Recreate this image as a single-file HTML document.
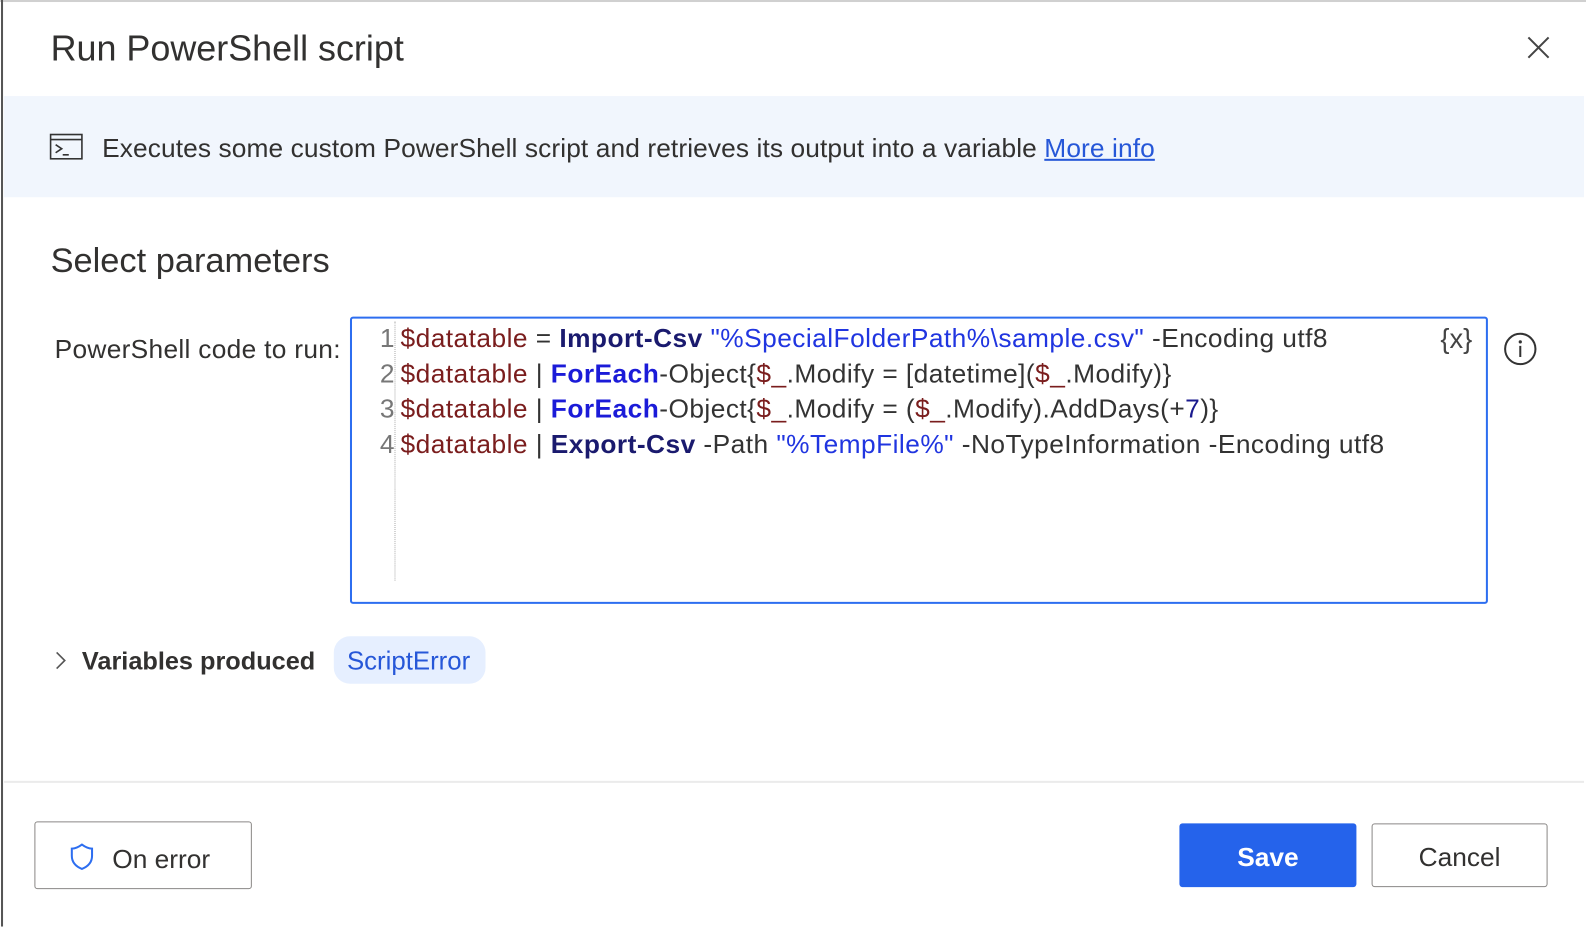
<!DOCTYPE html>
<html><head><meta charset="utf-8"><style>
*{margin:0;padding:0;box-sizing:border-box}
body{width:1586px;height:926px;background:#fff;font-family:"Liberation Sans",sans-serif;color:#323130;position:relative;overflow:hidden}
#w{position:absolute;left:0;top:0;width:1568px;height:916px;transform:scale(1.0115);transform-origin:0 0}
.abs{position:absolute;white-space:nowrap}
.code{font-size:26px;line-height:35px;letter-spacing:0.45px}
.dv{color:#7a1d1d}.kw{color:#1a1a6e;font-weight:bold}.fe{color:#1b1bd8;font-weight:bold}.st{color:#2035e0}.pl{color:#333}.num{color:#1a1a8e}
.ln{color:#777;display:inline-block;width:44px;text-align:right;padding-right:6px;letter-spacing:0}
</style></head><body><div id="w">
<div class="abs" style="left:0;top:0;width:1568px;height:2px;background:#d0d0d0"></div>
<div class="abs" style="left:1px;top:0;width:2px;height:916px;background:#555"></div>
<div class="abs" style="left:50px;top:28px;font-size:35.5px;color:#323130">Run PowerShell script</div>
<svg class="abs" style="left:1508px;top:34px" width="26" height="26" viewBox="0 0 26 26"><path d="M3 3L23 23M23 3L3 23" stroke="#444" stroke-width="2"/></svg>
<div class="abs" style="left:4px;top:95px;width:1562px;height:100px;background:#f1f6fd"></div>
<svg class="abs" style="left:49px;top:132px" width="33" height="26" viewBox="0 0 33 26"><rect x="1" y="1" width="31" height="24" fill="none" stroke="#333" stroke-width="1.6"/><path d="M1 6H32" stroke="#333" stroke-width="1.6"/><path d="M6 11L12 15L6 19M13 21H19" fill="none" stroke="#333" stroke-width="1.6"/></svg>
<div class="abs" style="left:101px;top:131px;font-size:26px;letter-spacing:0.1px;color:#323130">Executes some custom PowerShell script and retrieves its output into a variable <span style="color:#2657d8;text-decoration:underline">More info</span></div>
<div class="abs" style="left:50px;top:239px;font-size:34px;color:#323130">Select parameters</div>
<div class="abs" style="left:54px;top:330px;font-size:26px;letter-spacing:0.3px;color:#323130">PowerShell code to run:</div>
<div class="abs" style="left:346px;top:313px;width:1125px;height:284px;border:2px solid #2d6ef0;border-radius:3px"></div>
<div class="abs" style="left:390px;top:318px;height:256px;border-left:1px dotted #aaa"></div>
<div class="abs code" style="left:352px;top:317px">
<div><span class="ln">1</span><span class="dv">$datatable</span> <span class="pl">=</span> <span class="kw">Import-Csv</span> <span class="st">"%SpecialFolderPath%\sample.csv"</span> <span class="pl">-Encoding utf8</span></div>
<div><span class="ln">2</span><span class="dv">$datatable</span> <span class="pl">|</span> <span class="fe">ForEach</span><span class="pl">-Object{</span><span class="dv">$_</span><span class="pl">.Modify = [datetime](</span><span class="dv">$_</span><span class="pl">.Modify)}</span></div>
<div><span class="ln">3</span><span class="dv">$datatable</span> <span class="pl">|</span> <span class="fe">ForEach</span><span class="pl">-Object{</span><span class="dv">$_</span><span class="pl">.Modify = (</span><span class="dv">$_</span><span class="pl">.Modify).AddDays(+</span><span class="num">7</span><span class="pl">)}</span></div>
<div><span class="ln">4</span><span class="dv">$datatable</span> <span class="pl">|</span> <span class="kw">Export-Csv</span> <span class="pl">-Path</span> <span class="st">"%TempFile%"</span> <span class="pl">-NoTypeInformation -Encoding utf8</span></div>
</div>
<div class="abs" style="left:1424px;top:320px;font-size:27px;color:#444">{x}</div>
<svg class="abs" style="left:1486px;top:328px" width="34" height="34" viewBox="0 0 34 34"><circle cx="17" cy="17" r="15" fill="none" stroke="#333" stroke-width="2"/><circle cx="17" cy="10" r="1.6" fill="#333"/><path d="M17 14V25" stroke="#333" stroke-width="2"/></svg>
<svg class="abs" style="left:53px;top:643px" width="14" height="22" viewBox="0 0 14 22"><path d="M3 2L11 10L3 18" fill="none" stroke="#555" stroke-width="1.6"/></svg>
<div class="abs" style="left:81px;top:640px;font-size:25px;color:#323130;font-weight:bold">Variables produced</div>
<div class="abs" style="left:330px;top:629px;width:150px;height:47px;background:#e6efff;border-radius:16px"></div>
<div class="abs" style="left:343px;top:640px;font-size:25.5px;color:#2657d8">ScriptError</div>
<div class="abs" style="left:4px;top:772px;width:1562px;height:2px;background:#ebebeb"></div>
<div class="abs" style="left:34px;top:812px;width:215px;height:67px;border:1px solid #8a8886;border-radius:3px"></div>
<svg class="abs" style="left:68px;top:833px" width="26" height="28" viewBox="0 0 26 28"><path d="M13 2C9 5 6 6 3 6V13C3 20 8 24 13 26C18 24 23 20 23 13V6C20 6 17 5 13 2Z" fill="none" stroke="#2d6ef0" stroke-width="2"/></svg>
<div class="abs" style="left:111px;top:834px;font-size:26px;color:#323130">On error</div>
<div class="abs" style="left:1166px;top:814px;width:175px;height:63px;background:#2563eb;border-radius:3px;color:#fff;font-size:26px;font-weight:bold;text-align:center;line-height:66px">Save</div>
<div class="abs" style="left:1356px;top:814px;width:174px;height:63px;border:1px solid #8a8886;border-radius:3px;color:#323130;font-size:26px;text-align:center;line-height:64px">Cancel</div>
</div></body></html>
